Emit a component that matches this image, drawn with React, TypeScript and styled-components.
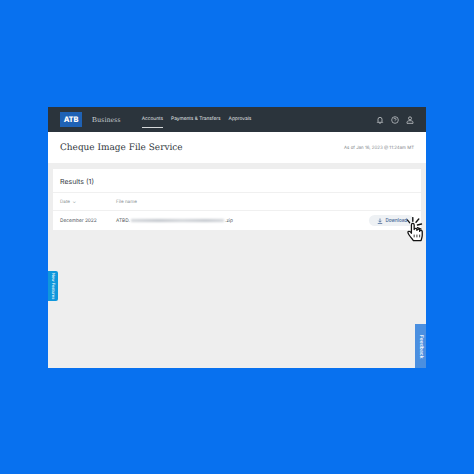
import React from 'react';
import styled, { createGlobalStyle } from 'styled-components';

const GlobalStyle = createGlobalStyle`
  html, body {
    margin: 0;
    padding: 0;
    background: #0871ef;
    font-family: 'Inter', 'Liberation Sans', sans-serif;
    text-rendering: geometricPrecision;
  }
  * {
    box-sizing: border-box;
  }
`;

const Page = styled.div`
  width: 474px;
  height: 474px;
  padding: 107px 48px 106px;
  background: #0871ef;
`;

const Window = styled.div`
  position: relative;
  display: flex;
  flex-direction: column;
  width: 378px;
  height: 261px;
  background: #eeeeee;
`;

const TopBar = styled.header`
  display: flex;
  align-items: center;
  flex: 0 0 25px;
  padding: 0 12px;
  background: #2b343c;
`;

const Logo = styled.div`
  display: flex;
  align-items: center;
  justify-content: center;
  width: 22px;
  height: 15px;
  background: #1f62b5;
  color: #fff;
  font-size: 7.5px;
  font-weight: 800;
  letter-spacing: -0.2px;
`;

const Brand = styled.span`
  margin-left: 10px;
  font-family: 'Liberation Serif', serif;
  font-size: 7.5px;
  letter-spacing: 0.25px;
  color: #c9ced2;
`;

const Nav = styled.nav`
  display: flex;
  align-items: center;
  gap: 8px;
  margin-left: 21px;
`;

const NavItem = styled.span<{ $active?: boolean }>`
  display: flex;
  align-items: center;
  height: 16px;
  border-bottom: 1px solid ${({ $active }) => ($active ? '#d5d8da' : 'transparent')};
  font-size: 4.8px;
  font-weight: 400;
  color: #e4e6e8;
  white-space: nowrap;
`;

const IconGroup = styled.div`
  display: flex;
  align-items: center;
  gap: 7px;
  margin-left: auto;
  color: #c6cacd;
`;

const TitleBar = styled.section`
  display: flex;
  align-items: center;
  justify-content: space-between;
  flex: 0 0 31px;
  padding: 0 12px;
  background: #ffffff;
`;

const Title = styled.h1`
  margin: 0;
  font-family: 'DejaVu Serif', 'Liberation Serif', serif;
  font-size: 8.95px;
  font-weight: 400;
  color: #30373d;
  white-space: nowrap;
`;

const Stamp = styled.span`
  margin-top: 2px;
  font-size: 4.4px;
  color: #858a8e;
`;

const Card = styled.section`
  display: flex;
  flex-direction: column;
  margin: 6px 5px 0;
  background: #ffffff;
`;

const CardHead = styled.div`
  display: flex;
  align-items: center;
  height: 24px;
  padding: 1px 0 0 7px;
  border-bottom: 1px solid #f0f0f0;
  font-size: 7px;
  font-weight: 400;
  color: #30373d;
`;

const Row = styled.div<{ $head?: boolean }>`
  display: grid;
  grid-template-columns: 56px 1fr auto;
  align-items: center;
  height: ${({ $head }) => ($head ? '18px' : '19px')};
  padding: ${({ $head }) => ($head ? '2px 7px 0' : '0 7px')};
  font-size: ${({ $head }) => ($head ? '4.6px' : '4.8px')};
  color: ${({ $head }) => ($head ? '#8a8f93' : '#50565b')};
  border-bottom: ${({ $head }) => ($head ? '1px solid #f0f0f0' : 'none')};
`;

const FileName = styled.span`
  display: flex;
  align-items: center;
`;

const Blurred = styled.span`
  display: inline-block;
  width: 93px;
  height: 3px;
  margin: 0 1px;
  background: linear-gradient(90deg, #d4d7db, #c2c6cc 30%, #d2d5d9 55%, #c4c8ce 80%, #d4d7db);
  filter: blur(0.9px);
`;

const DownloadButton = styled.button`
  display: flex;
  align-items: center;
  gap: 2px;
  height: 11px;
  padding: 0 7px 0 8px;
  border: none;
  border-radius: 6px;
  background: #eef1f4;
  color: #3c5f92;
  font-family: inherit;
  font-size: 4.5px;
  font-weight: 500;
`;

const FeaturesTab = styled.div`
  position: absolute;
  left: 0;
  top: 164px;
  display: flex;
  align-items: center;
  justify-content: center;
  width: 10px;
  height: 30px;
  border-radius: 0 2px 2px 0;
  background: #0f97dc;
  color: #e8f4fb;
  font-size: 4px;
  font-weight: 500;
  writing-mode: vertical-rl;
  white-space: nowrap;
`;

const FeedbackTab = styled.div`
  position: absolute;
  right: 0;
  bottom: 0;
  display: flex;
  align-items: center;
  justify-content: center;
  width: 11px;
  height: 44px;
  padding-top: 2px;
  background: #4a8fe0;
  color: #f2f7fd;
  font-size: 5px;
  font-weight: 600;
  writing-mode: vertical-rl;
  white-space: nowrap;
`;

const Pointer = styled.svg`
  position: absolute;
  left: 357px;
  top: 110px;
`;

const Bell = () => (
  <svg width="8" height="8" viewBox="0 0 24 24" fill="none" stroke="currentColor" strokeWidth="2.4">
    <path d="M6 17V10a6 6 0 0 1 12 0v7l2 2H4z" />
    <path d="M10 22h4" />
  </svg>
);

const Help = () => (
  <svg width="8" height="8" viewBox="0 0 24 24" fill="none" stroke="currentColor" strokeWidth="2.2">
    <circle cx="12" cy="12" r="10" />
    <path d="M9 9.500a3 3 0 1 1 4.500 2.600c-1 .6-1.500 1.200-1.500 2.400M12 17.500v.5" />
  </svg>
);

const Person = () => (
  <svg width="8" height="8" viewBox="0 0 24 24" fill="none" stroke="currentColor" strokeWidth="2.4">
    <circle cx="12" cy="7" r="4.500" />
    <path d="M3 22v-3c0-3 3-5 9-5s9 2 9 5v3z" />
  </svg>
);

const DownloadIcon = () => (
  <svg width="6" height="6" viewBox="0 0 24 24" fill="none" stroke="#3c5f92" strokeWidth="2.8">
    <path d="M12 2v14M6 11l6 6 6-6M3 22h18" />
  </svg>
);

const HandCursor = () => (
  <Pointer width="22" height="26" viewBox="0 0 24 28" fill="none">
    <path
      d="M9 25.500c-1-2-3-3.500-4.500-6-.8-1.300-2-3-1-3.800 1-.8 2.400.2 3.500 1.800V8.500c0-2.200 3-2.200 3 0v5c0-1.800 3-1.800 3 0v1c0-1.800 3-1.800 3 0v1c0-1.600 2.800-1.600 2.800.2v4c0 2.300-.8 3.600-1.300 5.800z"
      fill="#ffffff"
      stroke="#111111"
      strokeWidth="1.400"
      strokeLinejoin="round"
    />
    <path d="M10 19v3M13 19v3M16 19v3" stroke="#111111" strokeWidth="0.9" />
    <path
      d="M8.500 4.500V.5M5 6 2.500 3M12 5.500l3-3.500M13.500 8.500l4.500-1M13.500 11.500l4 1.500"
      stroke="#111111"
      strokeWidth="1.500"
      strokeLinecap="round"
    />
  </Pointer>
);

const App: React.FC = () => (
  <Page>
    <GlobalStyle />
    <Window>
      <TopBar>
        <Logo>ATB</Logo>
        <Brand>Business</Brand>
        <Nav>
          <NavItem $active>Accounts</NavItem>
          <NavItem>Payments &amp; Transfers</NavItem>
          <NavItem>Approvals</NavItem>
        </Nav>
        <IconGroup>
          <Bell />
          <Help />
          <Person />
        </IconGroup>
      </TopBar>
      <TitleBar>
        <Title>Cheque Image File Service</Title>
        <Stamp>As of Jan 16, 2023 @ 11:24am MT</Stamp>
      </TitleBar>
      <Card>
        <CardHead>Results (1)</CardHead>
        <Row $head>
          <span>Date &nbsp;⌄</span>
          <span>File name</span>
        </Row>
        <Row>
          <span>December 2022</span>
          <FileName>
            ATBD.
            <Blurred />
            .zip
          </FileName>
          <DownloadButton>
            <DownloadIcon />
            Download
          </DownloadButton>
        </Row>
      </Card>
      <FeaturesTab>New Features</FeaturesTab>
      <FeedbackTab>Feedback</FeedbackTab>
      <HandCursor />
    </Window>
  </Page>
);

export default App;
